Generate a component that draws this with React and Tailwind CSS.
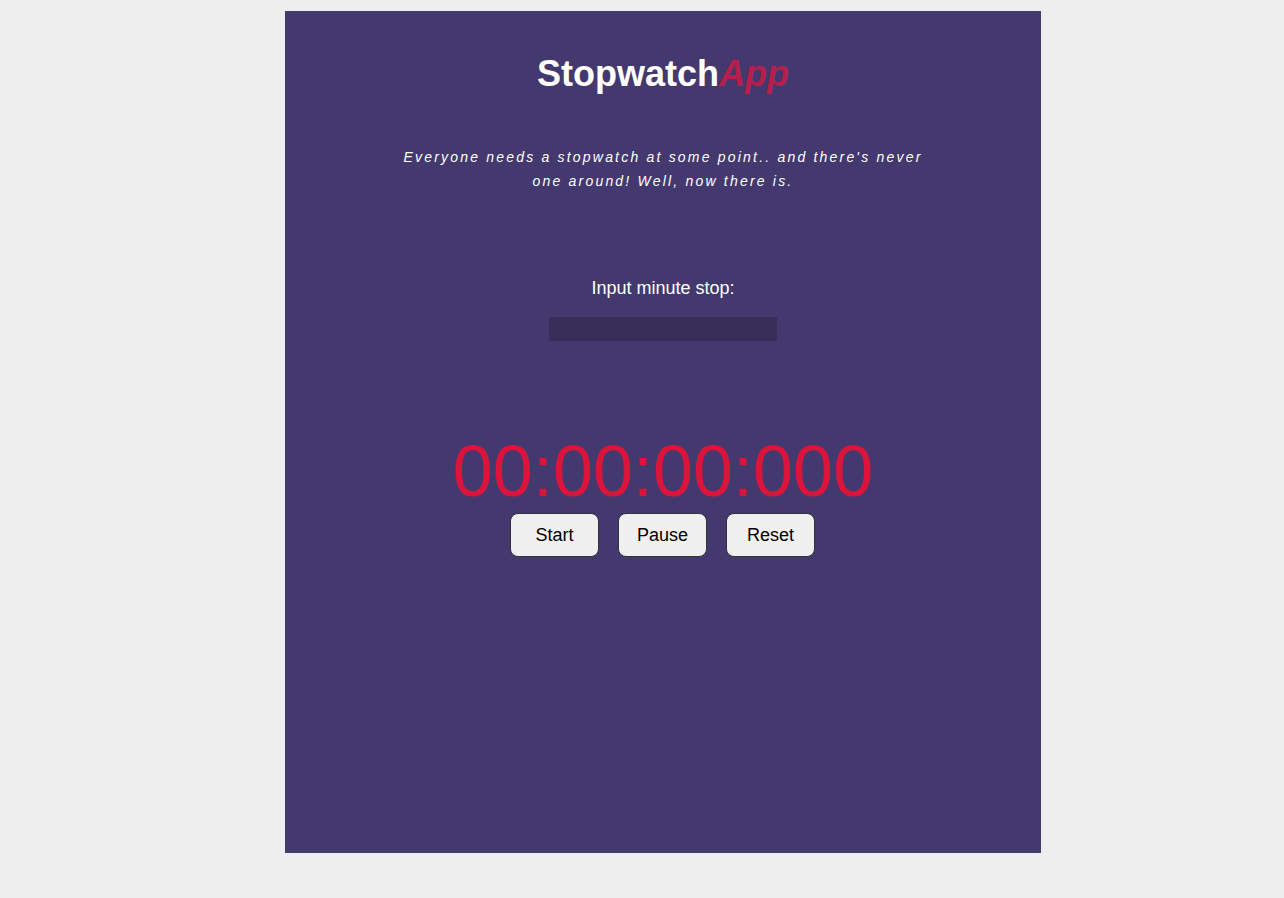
export default function App() {
  return (
    <div className="min-h-[898px] bg-[#eeeeee] pt-[11px]" style={{ fontFamily: '"Liberation Sans", Arial, sans-serif' }}>
      <div className="ml-[285px] w-[756px] h-[842px] bg-[#43396e] flex flex-col items-center pt-[42px]">
        <h1 className="text-[36px] leading-[41px] font-bold text-white">
          Stopwatch<span className="italic text-[#b51f4b]">App</span>
        </h1>
        <p className="mt-[51px] w-[530px] text-center italic text-[14px] leading-[24px] tracking-[2.2px] text-white">
          Everyone needs a stopwatch at some point.. and there's never one around! Well, now there is.
        </p>
        <label className="mt-[85px] text-[18px] leading-[21px] text-white">Input minute stop:</label>
        <input className="mt-[18px] w-[228px] h-[24px] bg-[#372e5a] outline-none text-white px-1" />
        <div className="mt-[89px] text-[72px] leading-[83px] text-[#dc143c]">00:00:00:000</div>
        <div className="flex gap-[19px] ml-[-1px]">
          {["Start", "Pause", "Reset"].map((t) => (
            <button key={t} className="w-[89px] h-[44px] rounded-[8px] bg-[#f0f0f0] border border-[#333] text-[18px] text-black">
              {t}
            </button>
          ))}
        </div>
      </div>
    </div>
  );
}
